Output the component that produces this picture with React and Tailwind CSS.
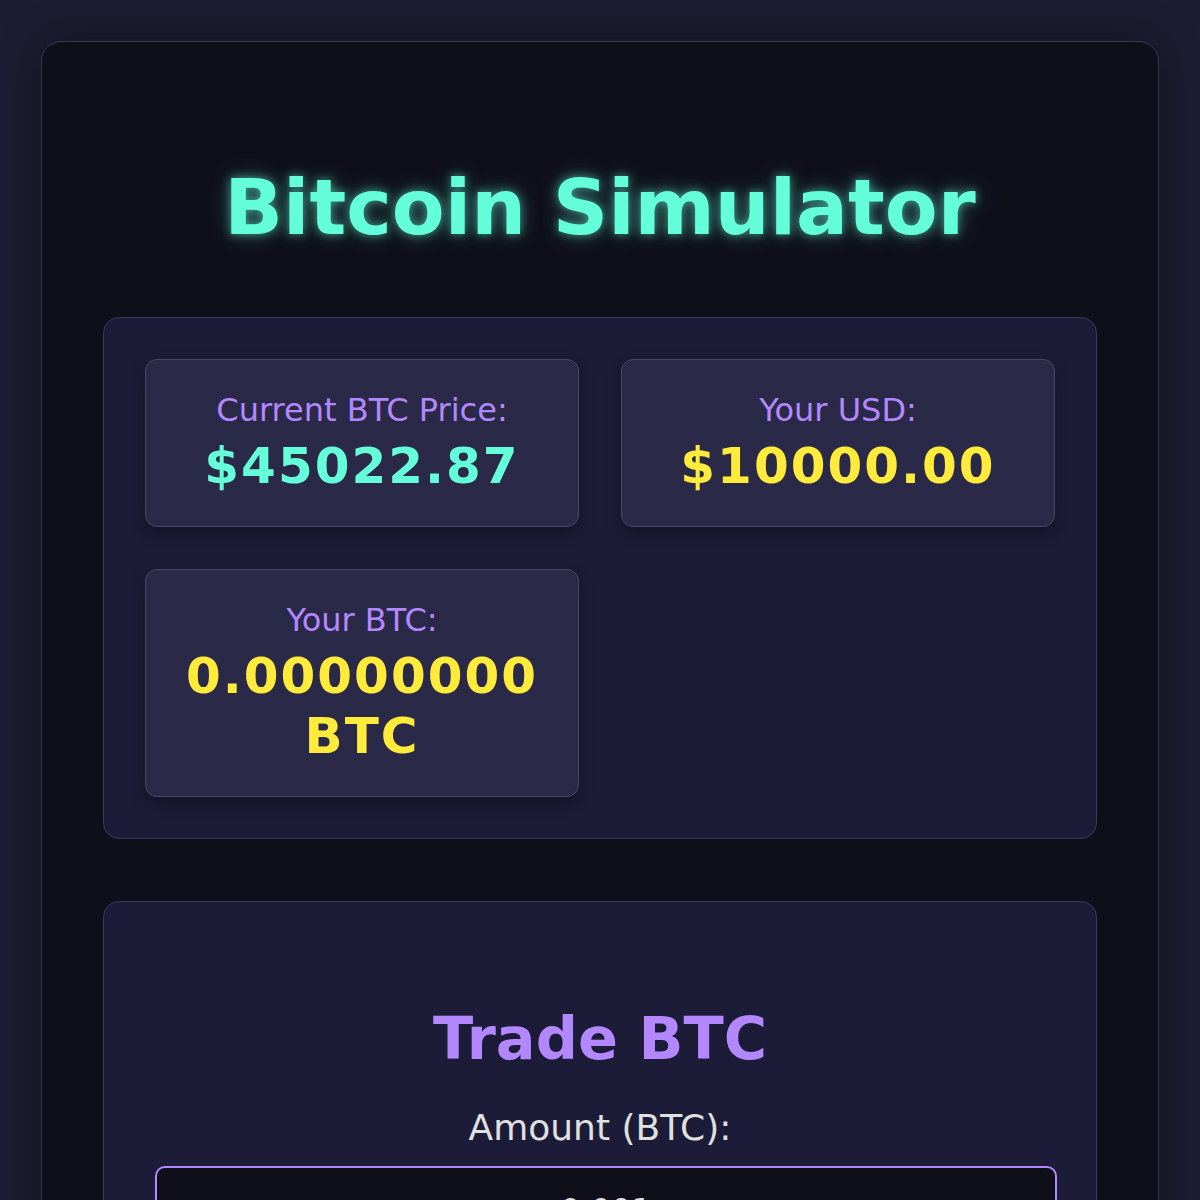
import React from 'react';

const font = { fontFamily: '"DejaVu Sans", "Liberation Sans", sans-serif' };

const StatCard = ({ label, value, tone }) => (
  <div className="rounded-[12px] border border-[#4a4869] bg-[#2a2948] px-[20px] py-[30px] text-center shadow-[0_6px_14px_rgba(0,0,0,0.35)]">
    <div className="text-[32px] leading-[40px] text-[#b388ff]">{label}</div>
    <div className={`mt-[6px] text-[50px] font-bold leading-[60px] tracking-[2px] ${tone}`}>{value}</div>
  </div>
);

export default function App() {
  return (
    <div className="min-h-screen bg-[#1d1c32] px-[41px] pt-[41px]" style={font}>
      <div className="rounded-[20px] border border-[#3a3859] bg-[#0f0f1a] px-[61px] pt-[61px] pb-[60px] shadow-[0_0_40px_rgba(0,0,0,0.35)]">
        <h1 className="mt-[57px] mb-[61px] text-center text-[77px] font-bold leading-[96px] text-[#64ffda] [text-shadow:0_0_10px_rgba(100,255,218,0.55),0_0_22px_rgba(100,255,218,0.3)]">
          Bitcoin Simulator
        </h1>

        <div className="rounded-[16px] border border-[#3a3a5c] bg-[#1c1c38] p-[41px]">
          <div className="grid grid-cols-2 gap-[42px]">
            <StatCard label="Current BTC Price:" value="$45022.87" tone="text-[#64ffda]" />
            <StatCard label="Your USD:" value="$10000.00" tone="text-[#ffeb3b]" />
            <StatCard label="Your BTC:" value="0.00000000 BTC" tone="text-[#ffeb3b]" />
          </div>
        </div>

        <div className="mt-[62px] rounded-[16px] border border-[#3a3a5c] bg-[#1c1c38] p-[41px]">
          <h2 className="mt-[66px] text-center text-[59px] font-bold leading-[60px] text-[#b388ff]">Trade BTC</h2>
          <label className="mt-[39px] block text-center text-[36px] leading-[40px] text-[#e0e0e0]">Amount (BTC):</label>
          <input
            type="text"
            defaultValue="0.001"
            className="mt-[18px] ml-[10px] block w-[902px] rounded-[10px] border-2 border-[#b388ff] bg-[#0f0f1a] px-[20px] py-[18px] text-center text-[32px] text-[#e0e0e0] outline-none"
          />
          <div className="h-[200px]" />
        </div>
      </div>
    </div>
  );
}
